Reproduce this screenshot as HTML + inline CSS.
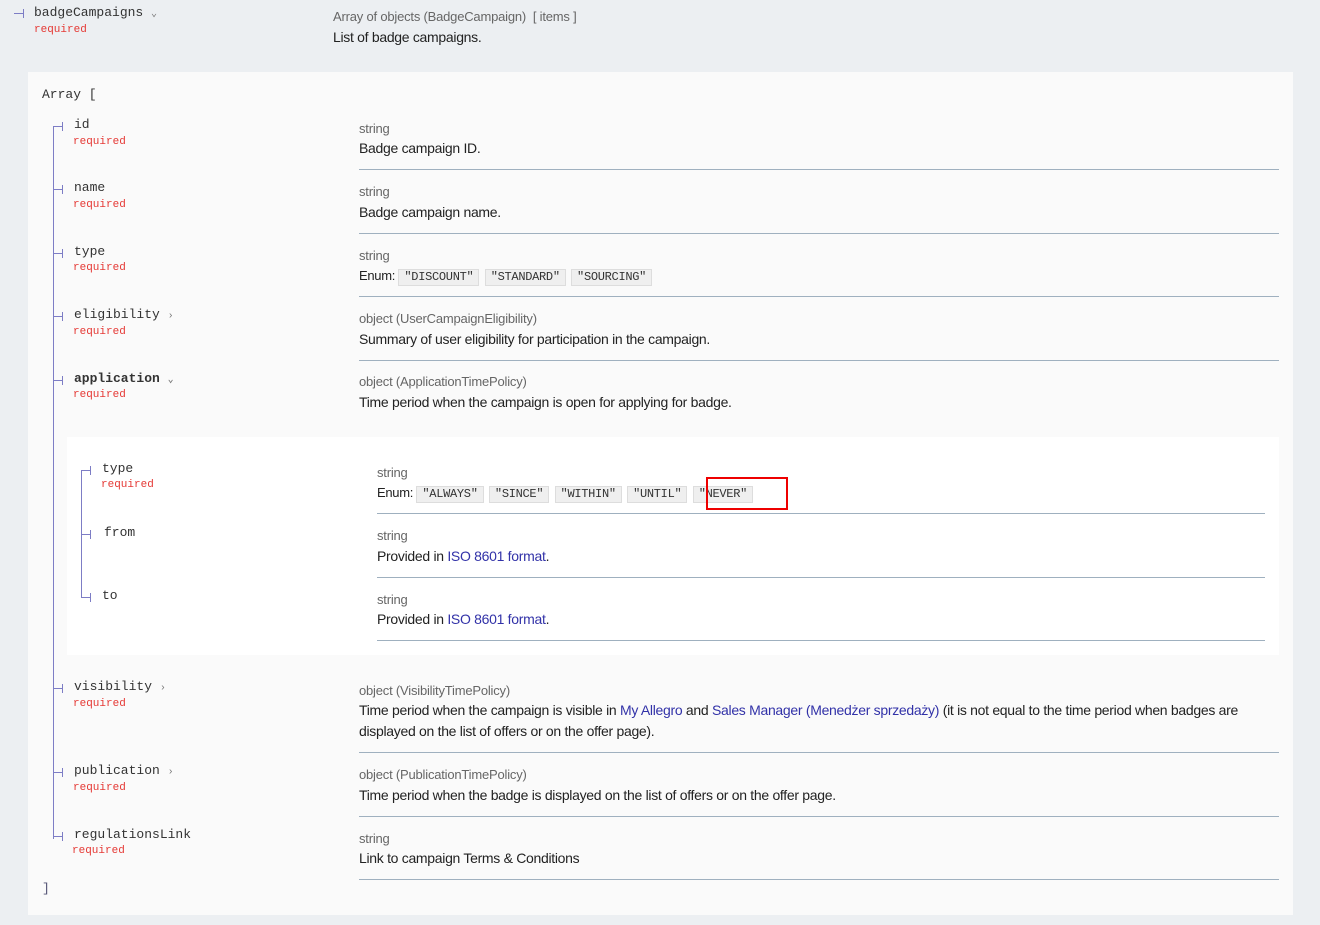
<!DOCTYPE html>
<html><head><meta charset="utf-8"><style>
body{margin:0;width:1320px;height:925px;background:#eceff2;position:relative;overflow:hidden;font-family:"Liberation Sans",sans-serif;color:#333}
.a{position:absolute;white-space:nowrap}
.m{font-family:"Liberation Mono",monospace;font-size:13px;color:#333}
.r{font-family:"Liberation Mono",monospace;font-size:11px;color:#e53935}
.t{font-size:13px;color:#666;letter-spacing:-0.2px}
.d{font-size:14px;color:#222;letter-spacing:-0.3px;line-height:21px}
.hr{position:absolute;height:1px;background:#9fb0bf}
.vl{position:absolute;width:1px;background:#7d7dc5}
.tk{position:absolute;height:1px;width:10px;background:#7d7dc5}
.tk:after{content:"";position:absolute;right:0;top:-4px;height:9px;width:1px;background:#7d7dc5}
.e{display:inline-block;font-family:"Liberation Mono",monospace;font-size:12px;background:#efefef;border:1px solid #ddd;padding:0 5px;line-height:15px;color:#333;margin-right:2px}
a{color:#3232a8;text-decoration:none}
.ch{font-size:10px;color:#777}
</style></head><body>
<div class="tk" style="left:14px;top:13px"></div>
<div class="a m" style="left:34px;top:5px">badgeCampaigns <span class="ch">&#8964;</span></div>
<div class="a r" style="left:34px;top:24px">required</div>
<div class="a t" style="left:333px;top:9px">Array of objects (BadgeCampaign) &nbsp;[ items ]</div>
<div class="a d" style="left:333px;top:27px">List of badge campaigns.</div>

<div class="a" style="left:28px;top:72px;width:1265px;height:843px;background:#fafafa"></div>
<div class="a m" style="left:42px;top:87px">Array [</div>
<div class="vl" style="left:53px;top:126px;height:713px"></div>

<!-- rows -->
<div class="tk" style="left:53px;top:126px"></div><div class="a m" style="left:74px;top:117px">id</div><div class="a r" style="left:73px;top:136px">required</div>
<div class="a t" style="left:359px;top:121px">string</div><div class="a d" style="left:359px;top:138px">Badge campaign ID.</div><div class="hr" style="left:359px;top:169px;width:920px"></div>

<div class="tk" style="left:53px;top:189px"></div><div class="a m" style="left:74px;top:180px">name</div><div class="a r" style="left:73px;top:199px">required</div>
<div class="a t" style="left:359px;top:184px">string</div><div class="a d" style="left:359px;top:202px">Badge campaign name.</div><div class="hr" style="left:359px;top:233px;width:920px"></div>

<div class="tk" style="left:53px;top:253px"></div><div class="a m" style="left:74px;top:244px">type</div><div class="a r" style="left:73px;top:262px">required</div>
<div class="a t" style="left:359px;top:248px">string</div><div class="a d" style="left:359px;top:265px;font-size:13px">Enum: <span class="e">"DISCOUNT"</span> <span class="e">"STANDARD"</span> <span class="e">"SOURCING"</span></div><div class="hr" style="left:359px;top:296px;width:920px"></div>

<div class="tk" style="left:53px;top:316px"></div><div class="a m" style="left:74px;top:307px">eligibility <span class="ch">&#8250;</span></div><div class="a r" style="left:73px;top:326px">required</div>
<div class="a t" style="left:359px;top:311px">object (UserCampaignEligibility)</div><div class="a d" style="left:359px;top:329px">Summary of user eligibility for participation in the campaign.</div><div class="hr" style="left:359px;top:360px;width:920px"></div>

<div class="tk" style="left:53px;top:380px"></div><div class="a m" style="left:74px;top:371px;font-weight:bold">application <span class="ch">&#8964;</span></div><div class="a r" style="left:73px;top:389px">required</div>
<div class="a t" style="left:359px;top:374px">object (ApplicationTimePolicy)</div><div class="a d" style="left:359px;top:392px">Time period when the campaign is open for applying for badge.</div>

<div class="a" style="left:67px;top:437px;width:1212px;height:218px;background:#fff"></div>
<div class="vl" style="left:81px;top:470px;height:128px"></div>
<div class="tk" style="left:81px;top:470px"></div><div class="a m" style="left:102px;top:461px">type</div><div class="a r" style="left:101px;top:479px">required</div>
<div class="a t" style="left:377px;top:465px">string</div><div class="a d" style="left:377px;top:482px;font-size:13px">Enum: <span class="e">"ALWAYS"</span> <span class="e">"SINCE"</span> <span class="e">"WITHIN"</span> <span class="e">"UNTIL"</span> <span class="e">"NEVER"</span></div>
<div class="a" style="left:706px;top:477px;width:78px;height:29px;border:2px solid #e00"></div>
<div class="hr" style="left:377px;top:513px;width:888px"></div>
<div class="tk" style="left:81px;top:534px"></div><div class="a m" style="left:104px;top:525px">from</div>
<div class="a t" style="left:377px;top:528px">string</div><div class="a d" style="left:377px;top:546px">Provided in <a>ISO 8601 format</a>.</div><div class="hr" style="left:377px;top:577px;width:888px"></div>
<div class="tk" style="left:81px;top:597px"></div><div class="a m" style="left:102px;top:588px">to</div>
<div class="a t" style="left:377px;top:592px">string</div><div class="a d" style="left:377px;top:609px">Provided in <a>ISO 8601 format</a>.</div><div class="hr" style="left:377px;top:640px;width:888px"></div>

<div class="tk" style="left:53px;top:688px"></div><div class="a m" style="left:74px;top:679px">visibility <span class="ch">&#8250;</span></div><div class="a r" style="left:73px;top:698px">required</div>
<div class="a t" style="left:359px;top:683px">object (VisibilityTimePolicy)</div><div class="a d" style="left:359px;top:700px">Time period when the campaign is visible in <a>My Allegro</a> and <a>Sales Manager (Menedżer sprzedaży)</a> (it is not equal to the time period when badges are<br>displayed on the list of offers or on the offer page).</div><div class="hr" style="left:359px;top:752px;width:920px"></div>

<div class="tk" style="left:53px;top:772px"></div><div class="a m" style="left:74px;top:763px">publication <span class="ch">&#8250;</span></div><div class="a r" style="left:73px;top:782px">required</div>
<div class="a t" style="left:359px;top:767px">object (PublicationTimePolicy)</div><div class="a d" style="left:359px;top:785px">Time period when the badge is displayed on the list of offers or on the offer page.</div><div class="hr" style="left:359px;top:816px;width:920px"></div>

<div class="tk" style="left:53px;top:836px"></div><div class="a m" style="left:74px;top:827px">regulationsLink</div><div class="a r" style="left:72px;top:845px">required</div>
<div class="a t" style="left:359px;top:831px">string</div><div class="a d" style="left:359px;top:848px">Link to campaign Terms &amp; Conditions</div><div class="hr" style="left:359px;top:879px;width:920px"></div>

<div class="a m" style="left:42px;top:881px;color:#557">]</div>
</body></html>
